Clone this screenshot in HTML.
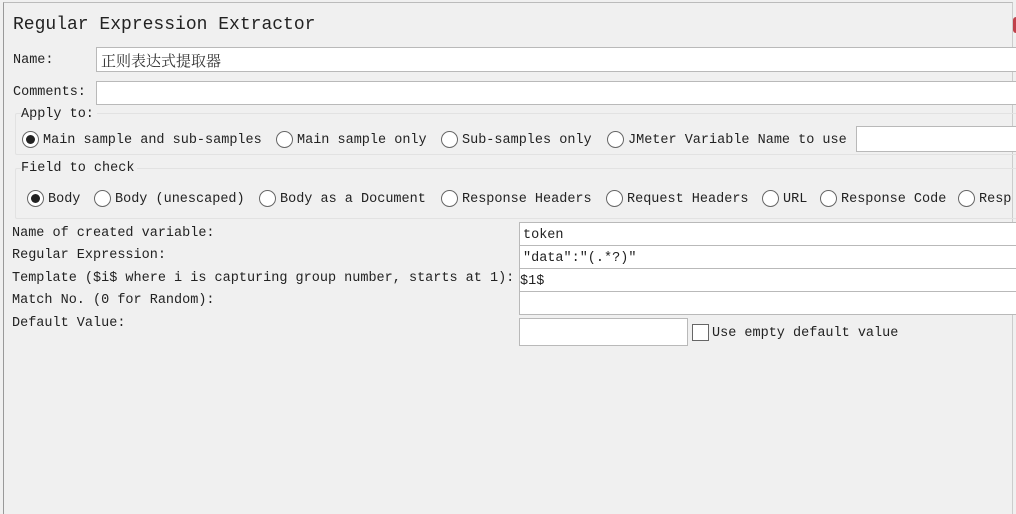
<!DOCTYPE html>
<html><head><meta charset="utf-8"><style>
*{box-sizing:border-box;margin:0;padding:0}
body{width:1016px;height:514px;background:#f0f0f0;position:relative;overflow:hidden;font-family:"Liberation Mono","Noto Sans CJK SC",monospace;font-size:13.5px;color:#222}
.a{position:absolute;white-space:nowrap}
.in{position:absolute;background:#fff;border:1px solid #b9b9b9}
.r{position:absolute;width:17px;height:17px;border:1px solid #666;border-radius:50%;background:#fff}
.r.on::after{content:"";position:absolute;left:3px;top:3px;width:9px;height:9px;border-radius:50%;background:#222}
.grp{position:absolute;border:1px solid #e2e2e2;border-radius:2px}
</style></head><body>
<div class="a" style="left:3px;top:2px;width:1010px;height:512px;border-left:1px solid #999;border-top:1px solid #bbb;border-right:1px solid #ccc"></div>
<div class="a" style="left:1013px;top:17px;width:6px;height:16px;border-radius:3px;background:#c0404a"></div>
<div class="a" style="left:13px;top:15px;font-size:18px">Regular Expression Extractor</div>
<div class="a" style="left:13px;top:53px">Name:</div>
<div class="in" style="left:96px;top:47px;width:925px;height:25px"></div>
<div class="a" style="left:101px;top:50px;font-size:15px;font-family:'Noto Serif CJK SC',serif;color:#333">正则表达式提取器</div>
<div class="a" style="left:13px;top:85px">Comments:</div>
<div class="in" style="left:96px;top:81px;width:925px;height:24px"></div>
<div class="grp" style="left:15px;top:113px;width:1010px;height:42px"></div>
<div class="a" style="left:21px;top:107px;background:#f0f0f0;padding-right:3px">Apply to:</div>
<div class="r on" style="left:22px;top:131px"></div><div class="a" style="left:43px;top:133px">Main sample and sub-samples</div>
<div class="r" style="left:276px;top:131px"></div><div class="a" style="left:297px;top:133px">Main sample only</div>
<div class="r" style="left:441px;top:131px"></div><div class="a" style="left:462px;top:133px">Sub-samples only</div>
<div class="r" style="left:607px;top:131px"></div><div class="a" style="left:628px;top:133px">JMeter Variable Name to use</div>
<div class="in" style="left:856px;top:126px;width:170px;height:26px"></div>
<div class="grp" style="left:15px;top:168px;width:1010px;height:51px"></div>
<div class="a" style="left:21px;top:161px;background:#f0f0f0;padding-right:3px">Field to check</div>
<div class="r on" style="left:27px;top:190px"></div><div class="a" style="left:48px;top:192px">Body</div>
<div class="r" style="left:94px;top:190px"></div><div class="a" style="left:115px;top:192px">Body (unescaped)</div>
<div class="r" style="left:259px;top:190px"></div><div class="a" style="left:280px;top:192px">Body as a Document</div>
<div class="r" style="left:441px;top:190px"></div><div class="a" style="left:462px;top:192px">Response Headers</div>
<div class="r" style="left:606px;top:190px"></div><div class="a" style="left:627px;top:192px">Request Headers</div>
<div class="r" style="left:762px;top:190px"></div><div class="a" style="left:783px;top:192px">URL</div>
<div class="r" style="left:820px;top:190px"></div><div class="a" style="left:841px;top:192px">Response Code</div>
<div class="r" style="left:958px;top:190px"></div><div class="a" style="left:979px;top:192px">Resp</div>
<div class="a" style="left:12px;top:226px">Name of created variable:</div>
<div class="a" style="left:12px;top:248px">Regular Expression:</div>
<div class="a" style="left:12px;top:271px">Template ($i$ where i is capturing group number, starts at 1):</div>
<div class="a" style="left:12px;top:293px">Match No. (0 for Random):</div>
<div class="a" style="left:12px;top:316px">Default Value:</div>
<div class="in" style="left:519px;top:222px;width:510px;height:24px"></div>
<div class="in" style="left:519px;top:245px;width:510px;height:24px"></div>
<div class="in" style="left:519px;top:268px;width:510px;height:24px"></div>
<div class="in" style="left:519px;top:291px;width:510px;height:24px"></div>
<div class="a" style="left:523px;top:228px">token</div>
<div class="a" style="left:523px;top:251px">"data":"(.*?)"</div>
<div class="a" style="left:520px;top:274px">$1$</div>
<div class="in" style="left:519px;top:318px;width:169px;height:28px"></div>
<div class="a" style="left:692px;top:324px;width:17px;height:17px;border:1px solid #666;background:#fff"></div>
<div class="a" style="left:712px;top:326px">Use empty default value</div>
</body></html>
